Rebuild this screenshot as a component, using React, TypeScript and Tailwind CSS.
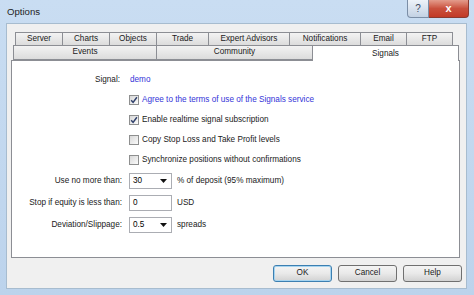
import React from 'react';

const font = { fontFamily: '"Liberation Sans", Arial, sans-serif' };

const row1 = [
  { label: 'Server', w: 'w-[48px]' },
  { label: 'Charts', w: 'w-[48px]' },
  { label: 'Objects', w: 'w-[48px]' },
  { label: 'Trade', w: 'w-[53px]' },
  { label: 'Expert Advisors', w: 'w-[82px]' },
  { label: 'Notifications', w: 'w-[72px]' },
  { label: 'Email', w: 'w-[47px]' },
  { label: 'FTP', w: 'w-[47px]' },
];

const row2 = [
  { label: 'Events', w: 'w-[144px]' },
  { label: 'Community', w: 'w-[157px]' },
];

const Tab = ({ label, w }: { label: string; w: string }) => (
  <div
    className={`${w} h-full flex items-center justify-center border border-[#8c8e94] -ml-px first:ml-0 bg-gradient-to-b from-[#f3f3f3] to-[#dcdcdc] text-[#1a1a1a]`}
  >
    {label}
  </div>
);

const Check = ({ checked }: { checked?: boolean }) => (
  <div className="w-[10px] h-[10px] border border-[#8e8f8f] bg-gradient-to-br from-[#d8d8d8] to-[#fbfbfb] flex items-center justify-center shrink-0">
    {checked && (
      <svg width="8" height="8" viewBox="0 0 8 8">
        <path d="M1.2 4.2 L3.1 6.4 L6.9 1.2" fill="none" stroke="#2f3f6a" strokeWidth="1.5" />
      </svg>
    )}
  </div>
);

const CheckRow = ({ label, checked, blue }: { label: string; checked?: boolean; blue?: boolean }) => (
  <div className="h-[16px] flex items-center pl-[117px] gap-[3px]">
    <Check checked={checked} />
    <span className={blue ? 'text-[#3434d8]' : 'text-[#1a1a1a]'}>{label}</span>
  </div>
);

const Combo = ({ value }: { value: string }) => (
  <div className="w-[43px] h-[16px] border border-[#abadb3] bg-white flex items-center justify-between pl-[3px] pr-[4px]">
    <span>{value}</span>
    <svg width="7" height="4" viewBox="0 0 7 4">
      <path d="M0 0 L7 0 L3.5 4 Z" fill="#111" />
    </svg>
  </div>
);

const FieldRow = ({ label, children, suffix, mt }: { label: string; children: React.ReactNode; suffix: string; mt: string }) => (
  <div className={`h-[16px] flex items-center ${mt}`}>
    <div className="w-[110px] text-right text-[#1a1a1a]">{label}</div>
    <div className="ml-[7px]">{children}</div>
    <span className="ml-[5px] text-[#1a1a1a]">{suffix}</span>
  </div>
);

const Button = ({ label, focus }: { label: string; focus?: boolean }) => (
  <div
    className={`w-[59px] h-[17px] rounded-[3px] border ${focus ? 'border-[#3c7fb1] shadow-[inset_0_0_0_1px_#a6d4f0]' : 'border-[#707070]'} bg-gradient-to-b from-[#f4f4f4] via-[#e9e9e9] to-[#d2d2d2] flex items-center justify-center text-[#1a1a1a]`}
  >
    {label}
  </div>
);

export default function App() {
  return (
    <div
      className="w-[474px] h-[295px] overflow-hidden bg-gradient-to-b from-[#c9ddf2] to-[#bcd3ec] flex flex-col pl-[6px] pr-[7px] pb-[6px] text-[8.2px]"
      style={font}
    >
      {/* title bar */}
      <div className="h-[23px] flex items-start justify-between shrink-0">
        <div className="pt-[5px] pl-[1px] text-[9.6px] text-[#1e1e1e]">Options</div>
        <div className="flex mr-[-2px]">
          <div className="w-[22px] h-[18px] rounded-bl-[4px] border border-[#7b8ea6] border-t-0 bg-gradient-to-b from-[#eef3f9] to-[#c3d2e4] flex items-center justify-center text-[10px] text-[#3b4a5e]">
            ?
          </div>
          <div className="w-[40px] h-[18px] rounded-br-[4px] border border-[#8a3a30] border-t-0 border-l-0 bg-gradient-to-b from-[#e39c8c] via-[#c9503d] to-[#c23a26] flex items-center justify-center text-[11px] font-bold text-white">
            x
          </div>
        </div>
      </div>

      {/* client area */}
      <div className="flex-1 bg-[#f0f0f0] border border-[#a7bccf] flex flex-col pl-[4px] pr-[4px] pt-[8px]">
        <div className="h-[14px] flex pl-[4px] pr-[2px]">
          {row1.map(t => (
            <Tab key={t.label} {...t} />
          ))}
        </div>
        <div className="h-[15px] flex pl-[2px] pr-[2px] -mt-px">
          {row2.map(t => (
            <Tab key={t.label} {...t} />
          ))}
          <div className="w-[147px] h-[16px] -ml-px flex justify-center pt-[2px] bg-white border border-[#8c8e94] border-b-0 relative z-10 text-[#1a1a1a]">
            Signals
          </div>
        </div>

        {/* panel */}
        <div className="h-[198px] bg-white border border-[#8c8e94] mr-[2px] flex flex-col pt-[11px]">
          <div className="h-[16px] flex items-center">
            <div className="w-[108px] text-right text-[#1a1a1a]">Signal:</div>
            <span className="ml-[10px] text-[#3434d8]">demo</span>
          </div>
          <div className="flex flex-col gap-[4px] mt-[4px]">
            <CheckRow label="Agree to the terms of use of the Signals service" checked blue />
            <CheckRow label="Enable realtime signal subscription" checked />
            <CheckRow label="Copy Stop Loss and Take Profit levels" />
            <CheckRow label="Synchronize positions without confirmations" />
          </div>
          <FieldRow label="Use no more than:" suffix="% of deposit (95% maximum)" mt="mt-[5px]">
            <Combo value="30" />
          </FieldRow>
          <FieldRow label="Stop if equity is less than:" suffix="USD" mt="mt-[6px]">
            <div className="w-[43px] h-[16px] border border-[#abadb3] bg-white flex items-center pl-[3px]">0</div>
          </FieldRow>
          <FieldRow label="Deviation/Slippage:" suffix="spreads" mt="mt-[6px]">
            <Combo value="0.5" />
          </FieldRow>
        </div>

        {/* buttons */}
        <div className="flex justify-end gap-[6px] mt-[7px]">
          <Button label="OK" focus />
          <Button label="Cancel" />
          <Button label="Help" />
        </div>
      </div>
    </div>
  );
}
